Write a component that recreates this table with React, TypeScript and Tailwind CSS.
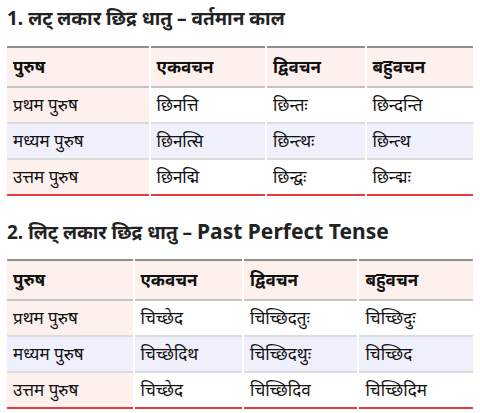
const rows1 = [
  ["प्रथम पुरुष", "छिनत्ति", "छिन्तः", "छिन्दन्ति"],
  ["मध्यम पुरुष", "छिनत्सि", "छिन्त्थः", "छिन्त्थ"],
  ["उत्तम पुरुष", "छिनद्मि", "छिन्द्वः", "छिन्द्मः"],
]

const rows2 = [
  ["प्रथम पुरुष", "चिच्छेद", "चिच्छिदतुः", "चिच्छिदुः"],
  ["मध्यम पुरुष", "चिच्छेदिथ", "चिच्छिदथुः", "चिच्छिद"],
  ["उत्तम पुरुष", "चिच्छेद", "चिच्छिदिव", "चिच्छिदिम"],
]

const head = ["पुरुष", "एकवचन", "द्विवचन", "बहुवचन"]

function Table({ rows, widths }: { rows: string[][]; widths: string[] }) {
  return (
    <table className="w-full border-separate border-spacing-x-[2px] border-spacing-y-0 text-[17px] text-[#111]">
      <thead>
        <tr>
          {head.map((h, i) => (
            <th
              key={h}
              className={`${widths[i]} h-[42px] px-[6px] text-left align-middle font-bold bg-[#fdf0ed] border-t-2 border-b-2 border-t-[#8f8f8f] border-b-[#c4c4c4]`}
            >
              {h}
            </th>
          ))}
        </tr>
      </thead>
      <tbody>
        {rows.map((r, ri) => (
          <tr key={ri}>
            {r.map((c, ci) => {
              const bg = ri === 1 ? "bg-[#f0f0fc]" : ci === 0 ? "bg-[#fdf0ed]" : "bg-white"
              const border =
                ri === rows.length - 1
                  ? "border-b-2 border-b-[#e23b3b]"
                  : "border-b-2 border-b-[#dcdcdc]"
              return (
                <td key={ci} className={`h-[36px] px-[6px] align-middle font-normal ${bg} ${border}`}>
                  {c}
                </td>
              )
            })}
          </tr>
        ))}
      </tbody>
    </table>
  )
}

export default function App() {
  return (
    <div
      className="w-[480px] h-[413px] bg-white px-[5px] overflow-hidden"
      style={{ fontFamily: '"Noto Sans", "Noto Sans Devanagari", sans-serif' }}
    >
      <h2 className="pt-[3px] pl-[2px] text-[19px] leading-[30px] font-bold text-[#222]">
        1. लट् लकार छिद्र धातु – वर्तमान काल
      </h2>
      <div className="mt-[13px]">
        <Table rows={rows1} widths={["w-[141px]", "w-[114px]", "w-[97px]", "w-[106px]"]} />
      </div>
      <h2 className="mt-[20px] pl-[2px] text-[19px] leading-[30px] font-bold text-[#222]">
        2. लिट् लकार छिद्र धातु – <span className="text-[21px]">Past Perfect Tense</span>
      </h2>
      <div className="mt-[12px]">
        <Table rows={rows2} widths={["w-[125px]", "w-[107px]", "w-[113px]", "w-[113px]"]} />
      </div>
    </div>
  )
}
